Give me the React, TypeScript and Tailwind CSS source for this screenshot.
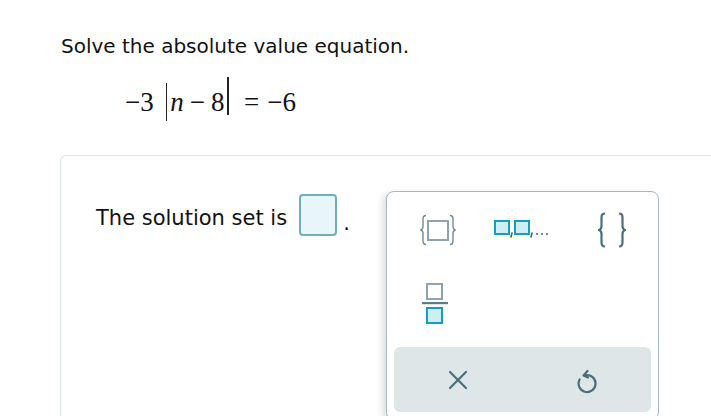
function BracedBox() {
  return (
    <svg width="36" height="32" viewBox="0 0 36 32" fill="none">
      <path
        d="M6 1.5 C3.5 1.5 3 2.5 3 5 L3 12.5 C3 14.5 2.5 15.5 1 16 C2.5 16.5 3 17.5 3 19.5 L3 27 C3 29.5 3.5 30.5 6 30.5"
        stroke="#6d8c96"
        strokeWidth="1.4"
      />
      <path
        d="M30 1.5 C32.5 1.5 33 2.5 33 5 L33 12.5 C33 14.5 33.5 15.5 35 16 C33.5 16.5 33 17.5 33 19.5 L33 27 C33 29.5 32.5 30.5 30 30.5"
        stroke="#6d8c96"
        strokeWidth="1.4"
      />
      <rect x="8" y="7" width="20" height="19" fill="#fff" stroke="#8ea3ab" strokeWidth="2" />
    </svg>
  );
}

function ListBoxes() {
  return (
    <svg width="56" height="22" viewBox="0 0 56 22" fill="none">
      <rect x="1" y="2" width="14" height="13" fill="#cdeef4" stroke="#14a0bd" strokeWidth="2" />
      <path d="M18 14 L17 18" stroke="#3f6570" strokeWidth="1.6" strokeLinecap="round" />
      <rect x="21" y="2" width="14" height="13" fill="#cdeef4" stroke="#14a0bd" strokeWidth="2" />
      <path d="M38 14 L37 18" stroke="#3f6570" strokeWidth="1.6" strokeLinecap="round" />
      <circle cx="43" cy="15" r="1" fill="#3f6570" />
      <circle cx="48" cy="15" r="1" fill="#3f6570" />
      <circle cx="53" cy="15" r="1" fill="#3f6570" />
    </svg>
  );
}

function EmptySet() {
  return (
    <svg width="28" height="36" viewBox="0 0 28 36" fill="none">
      <path
        d="M7 1.5 C4 1.5 3.5 3 3.5 5.5 L3.5 14 C3.5 16 3 17.2 1.2 18 C3 18.8 3.5 20 3.5 22 L3.5 30.5 C3.5 33 4 34.5 7 34.5"
        stroke="#4a6f7b"
        strokeWidth="2.2"
      />
      <path
        d="M21 1.5 C24 1.5 24.5 3 24.5 5.5 L24.5 14 C24.5 16 25 17.2 26.8 18 C25 18.8 24.5 20 24.5 22 L24.5 30.5 C24.5 33 24 34.5 21 34.5"
        stroke="#4a6f7b"
        strokeWidth="2.2"
      />
    </svg>
  );
}

function FractionIcon() {
  return (
    <svg width="28" height="44" viewBox="0 0 28 44" fill="none">
      <rect x="6" y="2" width="15" height="15" fill="#fff" stroke="#8ea3ab" strokeWidth="2" />
      <rect x="1" y="20" width="26" height="2.2" fill="#5b7d88" />
      <rect x="6" y="26" width="15" height="15" fill="#cdeef4" stroke="#14a0bd" strokeWidth="2" />
    </svg>
  );
}

function ClearIcon() {
  return (
    <svg width="20" height="20" viewBox="0 0 20 20" fill="none">
      <path d="M2 2 L18 18 M18 2 L2 18" stroke="#4a6f7b" strokeWidth="2.2" strokeLinecap="round" />
    </svg>
  );
}

function ResetIcon() {
  return (
    <svg width="22" height="28" viewBox="0 0 22 28" fill="none">
      <path
        d="M9.5 9.2 A8.5 8.5 0 1 1 3.6 13.5"
        stroke="#4a6f7b"
        strokeWidth="2.2"
        strokeLinecap="round"
      />
      <path
        d="M11.5 5 L7.5 9.5 L12 11.5"
        stroke="#4a6f7b"
        strokeWidth="2.2"
        strokeLinecap="round"
        strokeLinejoin="round"
      />
    </svg>
  );
}

function AbsBar() {
  return <span className="inline-block h-[38px] w-[1.5px] bg-[#222]" />;
}

export default function App() {
  return (
    <main className="h-[416px] w-[711px] overflow-hidden bg-white font-['DejaVu_Sans',Verdana,sans-serif] text-[#111]">
      <div className="pl-[61px] pt-[33px]">
        <p className="text-[20px] leading-[26px]">Solve the absolute value equation.</p>
        <div className="mt-[23px] flex h-[40px] items-center pl-[64px] [font-family:'Liberation_Serif','Times_New_Roman',serif] text-[27px] text-[#111]">
          <span>−3</span>
          <span className="ml-[12px] flex items-center">
            <AbsBar />
            <span className="ml-[3px] italic">n</span>
            <span className="mx-[6px]">−</span>
            <span>8</span>
            <span className="ml-[3px]">
              <AbsBar />
            </span>
          </span>
          <span className="ml-[15px]">=</span>
          <span className="ml-[8px]">−6</span>
        </div>
      </div>

      <section className="ml-[60px] mt-[33px] w-[700px] rounded-tl-md border-l border-t border-[#dfe4e6] pl-[35px] pt-[35px]">
        <div className="flex items-start">
          <div className="mt-[3px] flex w-[290px] items-center text-[21px]">
            <span className="mt-[8px]">The solution set is</span>
            <span className="ml-[12px] h-[42px] w-[38px] rounded-[4px] border-2 border-[#72adbb] bg-[#e8f5f9]" />
            <span className="ml-[6px] self-end pb-[2px] leading-none">.</span>
          </div>

          <div className="h-[229px] w-[273px] rounded-lg border border-[#a9b7bc] bg-white p-[7px] shadow-[-4px_2px_6px_rgba(0,0,0,0.12)]">
            <div className="grid h-[62px] grid-cols-3 items-center">
              <div className="flex justify-center pl-[2px]">
                <BracedBox />
              </div>
              <div className="flex justify-center">
                <ListBoxes />
              </div>
              <div className="flex justify-center pl-[8px]">
                <EmptySet />
              </div>
            </div>
            <div className="grid h-[86px] grid-cols-3 items-center">
              <div className="flex justify-center pr-[4px]">
                <FractionIcon />
              </div>
            </div>
            <div className="grid h-[65px] grid-cols-2 items-center rounded-md bg-[#dfe6e8]">
              <div className="flex justify-center">
                <ClearIcon />
              </div>
              <div className="flex justify-center">
                <ResetIcon />
              </div>
            </div>
          </div>
        </div>
      </section>
    </main>
  );
}
